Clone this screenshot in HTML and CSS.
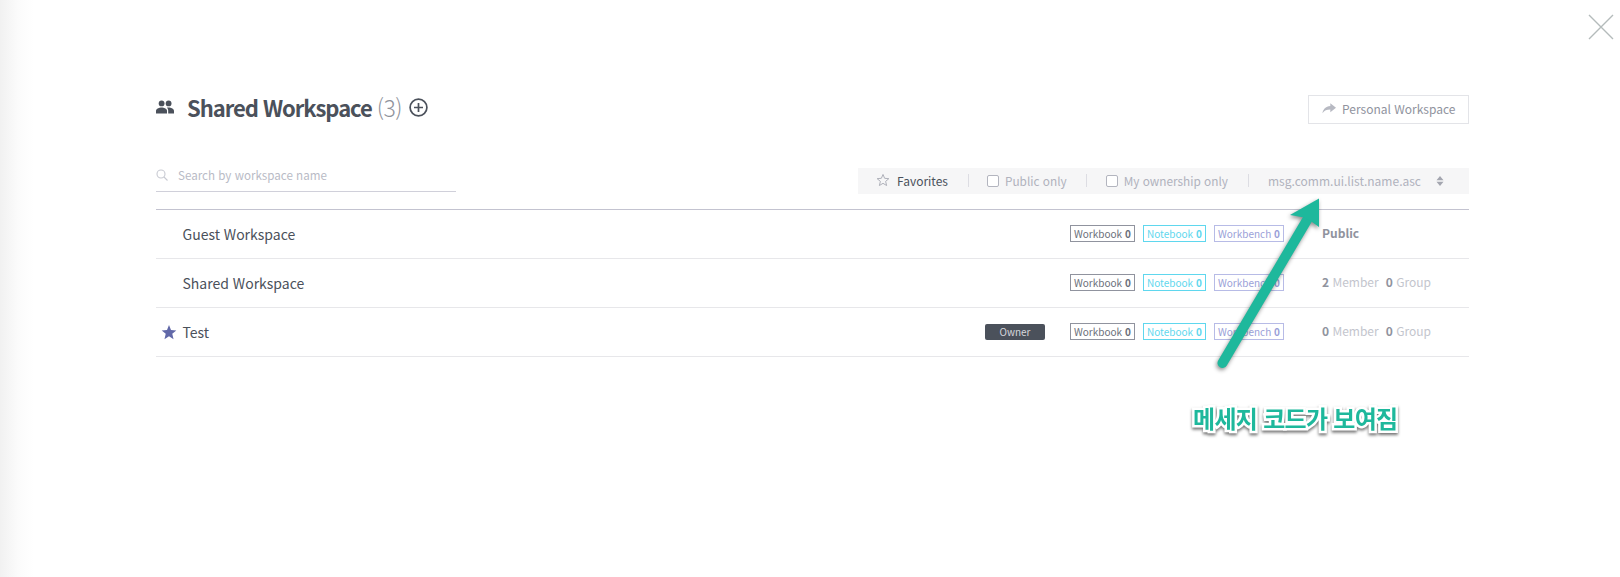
FILE: index.html
```html
<!DOCTYPE html>
<html lang="ko">
<head>
  <meta charset="UTF-8" />
  <title>Shared Workspace</title>
  <link rel="stylesheet" href="styles.css">
</head>
<body>
  <a class="close" href="#">
    <svg width="26" height="26" viewBox="0 0 26 26"><path d="M1 1 L25 25 M25 1 L1 25" /></svg>
  </a>

  <div class="wrap">
    <div class="head">
      <div class="title">
        <svg class="ico-people" width="18" height="14" viewBox="0 0 18 14"><circle cx="5.6" cy="3.4" r="2.9" /><circle cx="12.6" cy="3.4" r="2.9" /><path d="M0 13.5 V11 C0 8.8 3.2 7.6 5.6 7.6 C8 7.6 11 8.8 11 11 V13.5 Z" /><path d="M12.2 13.5 V10.8 C12.2 9.5 11.7 8.5 10.9 7.8 C11.4 7.7 12 7.6 12.6 7.6 C15 7.6 18 8.8 18 11 V13.5 Z" /></svg>
        <h1>Shared Workspace</h1>
        <span class="count">(3)</span>
        <svg class="ico-add" width="19" height="19" viewBox="0 0 19 19"><circle cx="9.5" cy="9.5" r="8.4" /><path d="M9.5 5 V14 M5 9.5 H14" /></svg>
      </div>
      <button class="btn-personal">
        <svg width="14" height="11" viewBox="0 0 16 12"><path d="M9.5 0 L16 5.2 L9.5 10.4 V7.2 C5.5 7.2 2.6 8.4 0.5 11.5 C1.2 7 4 3.8 9.5 3.2 Z" /></svg>
        <span>Personal Workspace</span>
      </button>
    </div>

    <div class="tools">
      <div class="search">
        <svg width="12" height="12" viewBox="0 0 12 12"><circle cx="5" cy="5" r="4" /><path d="M8 8 L11.5 11.5" /></svg>
        <span>Search by workspace name</span>
      </div>
      <div class="filter">
        <span class="fav">
          <svg width="14" height="14" viewBox="0 0 24 24"><path d="M12 2.5 L14.8 9.1 L22 9.7 L16.5 14.4 L18.2 21.5 L12 17.7 L5.8 21.5 L7.5 14.4 L2 9.7 L9.2 9.1 Z" /></svg>
          Favorites
        </span>
        <i class="sep sep-a"></i>
        <label class="chk chk-a"><b></b>Public only</label>
        <i class="sep sep-b"></i>
        <label class="chk chk-b"><b></b>My ownership only</label>
        <i class="sep sep-c"></i>
        <span class="sort">msg.comm.ui.list.name.asc</span>
        <svg class="ico-sort" width="8" height="10" viewBox="0 0 8 10"><path d="M4 0 L7.5 4.2 H0.5 Z M4 10 L7.5 5.8 H0.5 Z" /></svg>
      </div>
    </div>

    <ul class="list">
      <li class="row">
        <span class="star"></span>
        <span class="name">Guest Workspace</span>
        <span class="tags">
          <span class="tag wb">Workbook <b>0</b></span>
          <span class="tag nb">Notebook <b>0</b></span>
          <span class="tag wbc">Workbench <b>0</b></span>
        </span>
        <span class="info"><b>Public</b></span>
      </li>
      <li class="row">
        <span class="star"></span>
        <span class="name">Shared Workspace</span>
        <span class="tags">
          <span class="tag wb">Workbook <b>0</b></span>
          <span class="tag nb">Notebook <b>0</b></span>
          <span class="tag wbc">Workbench <b>0</b></span>
        </span>
        <span class="info"><span class="num"><b>2</b> Member</span><span><b>0</b> Group</span></span>
      </li>
      <li class="row">
        <span class="star"><svg width="16" height="16" viewBox="0 0 24 24"><path d="M12 1.5 L15 9 L23 9.6 L16.9 14.8 L18.8 22.7 L12 18.4 L5.2 22.7 L7.1 14.8 L1 9.6 L9 9 Z" /></svg></span>
        <span class="name">Test</span>
        <span class="owner">Owner</span>
        <span class="tags">
          <span class="tag wb">Workbook <b>0</b></span>
          <span class="tag nb">Notebook <b>0</b></span>
          <span class="tag wbc">Workbench <b>0</b></span>
        </span>
        <span class="info"><span class="num"><b>0</b> Member</span><span><b>0</b> Group</span></span>
      </li>
    </ul>
  </div>

  <!-- annotation drawn on top of the screenshot -->
  <svg class="arrow" width="1620" height="577" viewBox="0 0 1620 577">
    <path class="arrow-line" d="M1307 220 L1222.5 363" />
    <path class="arrow-head" d="M1319 198.5 L1290 215 L1304 217.5 L1312 222 L1319 227 Z" />
  </svg>
  <div class="note">메세지 코드가 보여짐</div>
</body>
</html>
```

FILE: styles.css
```css
* {
  box-sizing: border-box;
}
html, body {
  height: 100%;
}
body {
  margin: 0;
  position: relative;
  overflow: hidden;
  font-family: "Noto Sans CJK KR", "Noto Sans", sans-serif;
  color: #4b515b;
  background: linear-gradient(to right, #f1f1f1 0, #fbfbfb 18px, #fff 34px);
}
.wrap {
  padding: 92px 151px 0 156px;
}
.close {
  position: absolute;
  top: 14px;
  left: 1588px;
  line-height: 0;
}
.close path {
  stroke: #b4bbbb;
  stroke-width: 1.4;
  fill: none;
}

/* head */
.head {
  display: flex;
  justify-content: space-between;
  align-items: flex-start;
  height: 74px;
}
.title {
  display: flex;
  align-items: center;
  height: 30px;
}
.ico-people {
  fill: #4b515b;
  margin-right: 13px;
}
.title h1 {
  margin: 0;
  font-size: 22px;
  font-weight: 700;
  letter-spacing: -1.05px;
  line-height: 30px;
  color: #4b515b;
}
.count {
  font-size: 23px;
  font-weight: 300;
  line-height: 30px;
  color: #8f939c;
  margin-left: 5px;
  letter-spacing: -0.5px;
}
.ico-add {
  margin-left: 7px;
}
.ico-add circle, .ico-add path {
  fill: none;
  stroke: #4b515b;
  stroke-width: 1.7;
}
.btn-personal {
  display: flex;
  align-items: center;
  gap: 6px;
  width: 161px;
  height: 29px;
  margin-top: 3px;
  padding: 0 0 2px 13px;
  background: #fff;
  border: 1px solid #e3e4e8;
  font-family: inherit;
  font-size: 12px;
  color: #90939e;
  white-space: nowrap;
}
.btn-personal svg {
  fill: #b7b9c2;
}

/* search + filter */
.tools {
  display: flex;
  justify-content: space-between;
  height: 44px;
  border-bottom: 1px solid #c3c3d0;
}
.search {
  display: flex;
  align-items: center;
  gap: 10px;
  width: 300px;
  height: 26px;
  border-bottom: 1px solid #d0d0da;
  font-size: 11.6px;
  color: #b9bbc6;
  padding-bottom: 7px;
}
.search svg {
  fill: none;
  stroke: #c8cad2;
  stroke-width: 1.1;
}
.filter {
  display: flex;
  align-items: center;
  width: 611px;
  height: 26px;
  margin-top: 2px;
  padding: 0 0 2px 18px;
  background: #f6f6f7;
  font-size: 12px;
  color: #b0b2bd;
}
.fav {
  display: flex;
  align-items: center;
  gap: 7px;
  color: #4b515b;
}
.fav svg {
  fill: none;
  stroke: #a9abb5;
  stroke-width: 1.6;
}
.sep {
  display: block;
  width: 1px;
  height: 13px;
  background: #dddde3;
}
.sep-a {
  margin: 0 18px 0 20px;
}
.sep-b {
  margin: 0 19px 0 19px;
}
.sep-c {
  margin: 0 19px 0 20px;
}
.chk {
  display: flex;
  align-items: center;
  gap: 6px;
  font-size: 11.8px;
}
.chk b {
  display: block;
  width: 12px;
  height: 12px;
  margin-top: 2px;
  border: 1px solid #b3b5bf;
  border-radius: 2px;
  background: #fff;
}
.sort {
  width: 154px;
  white-space: nowrap;
}
.ico-sort {
  fill: #a4a6b0;
  margin-left: 14px;
  margin-top: 2px;
}

/* list */
.list {
  margin: 0;
  padding: 0;
  list-style: none;
}
.row {
  display: flex;
  align-items: center;
  height: 49px;
  border-bottom: 1px solid #e7e7ea;
}
.star {
  display: flex;
  width: 26.5px;
  padding-left: 5px;
}
.star svg {
  fill: #6168a8;
}
.name {
  flex: 1;
  font-size: 14px;
  color: #4b515b;
}
.owner {
  width: 60px;
  height: 16px;
  margin-right: 25px;
  border-radius: 2px;
  background: #4b515b;
  color: #d6d7dc;
  font-size: 10px;
  line-height: 16px;
  text-align: center;
}
.tags {
  display: flex;
  gap: 8px;
  width: 252px;
  margin-top: -1px;
}
.tag {
  height: 17px;
  padding: 0 3px;
  border: 1px solid;
  font-size: 10px;
  line-height: 15px;
  white-space: nowrap;
}
.tag b {
  font-weight: 700;
}
.wb {
  width: 65px;
  border-color: #90939e;
  color: #6b6f7a;
}
.nb {
  width: 63px;
  border-color: #5fd7ee;
  color: #5fd7ee;
}
.wbc {
  width: 70px;
  border-color: #b7bbe6;
  color: #9a9fd8;
}
.info {
  display: flex;
  gap: 7px;
  width: 147px;
  margin-top: -3px;
  font-size: 12px;
  color: #c3c5cd;
}
.info b {
  font-weight: 700;
  color: #90939e;
}

/* annotation */
.arrow {
  position: absolute;
  top: 0;
  left: 0;
  pointer-events: none;
  filter: drop-shadow(-1px 2px 2px rgba(0, 0, 0, 0.45));
}
.arrow-line {
  fill: none;
  stroke: #1eb89c;
  stroke-width: 10;
  stroke-linecap: round;
}
.arrow-head {
  fill: #1eb89c;
}
.note {
  position: absolute;
  top: 400px;
  left: 1193px;
  width: 204px;
  font-size: 24px;
  font-weight: 700;
  line-height: 36px;
  letter-spacing: -0.7px;
  white-space: nowrap;
  color: #1eb89c;
  -webkit-text-stroke: 5px #fff;
  paint-order: stroke fill;
  filter: drop-shadow(0 2px 1.5px rgba(0, 0, 0, 0.55));
}
```
